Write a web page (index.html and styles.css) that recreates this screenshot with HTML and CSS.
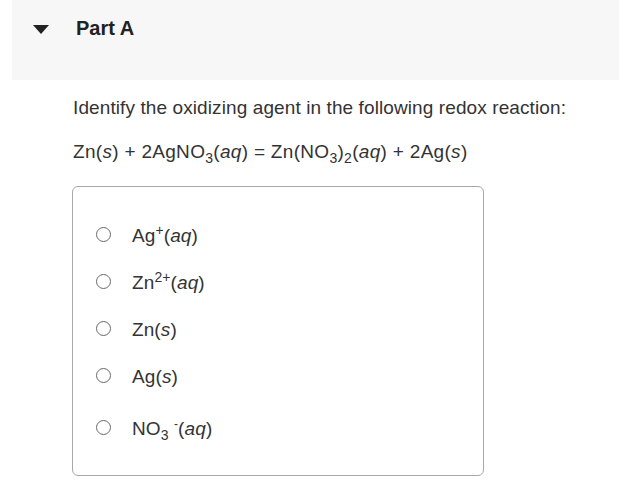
FILE: index.html
```html
<!DOCTYPE html>
<html>
<head>
<meta charset="utf-8">
<link rel="stylesheet" href="styles.css">
</head>
<body>
<div class="part-header">
  <span class="caret"></span>
  <h2 class="part-title">Part A</h2>
</div>
<div class="part-body">
  <p class="prompt">Identify the oxidizing agent in the following redox reaction:</p>
  <p class="equation">Zn(<i>s</i>) + 2AgNO<sub>3</sub>(<i>aq</i>) = Zn(NO<sub>3</sub>)<sub>2</sub>(<i>aq</i>) + 2Ag(<i>s</i>)</p>
  <div class="choices">
    <label class="choice c1"><span class="radio"></span><span class="choice-text">Ag<sup>+</sup>(<i>aq</i>)</span></label>
    <label class="choice c2"><span class="radio"></span><span class="choice-text">Zn<sup>2+</sup>(<i>aq</i>)</span></label>
    <label class="choice c3"><span class="radio"></span><span class="choice-text">Zn(<i>s</i>)</span></label>
    <label class="choice c4"><span class="radio"></span><span class="choice-text">Ag(<i>s</i>)</span></label>
    <label class="choice c5"><span class="radio"></span><span class="choice-text">NO<sub>3</sub> <sup class="minus">-</sup>(<i>aq</i>)</span></label>
  </div>
</div>
</body>
</html>
```
FILE: styles.css
```css
html, body {
  margin: 0;
  padding: 0;
  background: #ffffff;
}
body {
  font-family: "Liberation Sans", Arial, sans-serif;
  color: #333333;
  width: 619px;
  height: 484px;
  overflow: hidden;
}
.part-header {
  margin-left: 12px;
  height: 80px;
  background: #f7f7f7;
  display: flex;
  align-items: flex-start;
}
.caret {
  width: 0;
  height: 0;
  border-left: 8px solid transparent;
  border-right: 8px solid transparent;
  border-top: 9px solid #222222;
  margin: 25px 0 0 21px;
}
.part-title {
  margin: 0 0 0 27px;
  padding-top: 16px;
  font-size: 20px;
  line-height: 24px;
  font-weight: bold;
  color: #222222;
}
.part-body {
  padding-left: 73px;
}
.prompt, .equation {
  margin: 0;
  font-size: 19px;
  line-height: 22px;
  letter-spacing: 0.1px;
}
.prompt {
  padding-top: 17px;
}
.equation {
  padding-top: 22px;
  letter-spacing: 0.3px;
}
sub, sup {
  line-height: 0;
  font-size: 14px;
}
sub {
  vertical-align: -5px;
}
sup {
  vertical-align: 7px;
}
.choices {
  margin: 23px 0 0 -1px;
  width: 412px;
  height: 290px;
  border: 1px solid #a8a8a8;
  border-radius: 6px;
  padding-top: 38px;
  box-sizing: border-box;
}
.choice {
  display: flex;
  align-items: center;
  height: 22px;
  font-size: 19px;
  line-height: 22px;
  letter-spacing: 0.1px;
  margin-left: 23px;
}
.c2 { margin-top: 25px; }
.c3 { margin-top: 25px; }
.c4 { margin-top: 25px; }
.c5 { margin-top: 30px; }
.radio {
  width: 15px;
  height: 15px;
  box-sizing: border-box;
  border: 1.3px solid #6a6a6a;
  border-radius: 50%;
  margin-right: 21px;
  margin-bottom: 3px;
  flex: none;
}
.minus {
  font-size: 12px;
}
```
